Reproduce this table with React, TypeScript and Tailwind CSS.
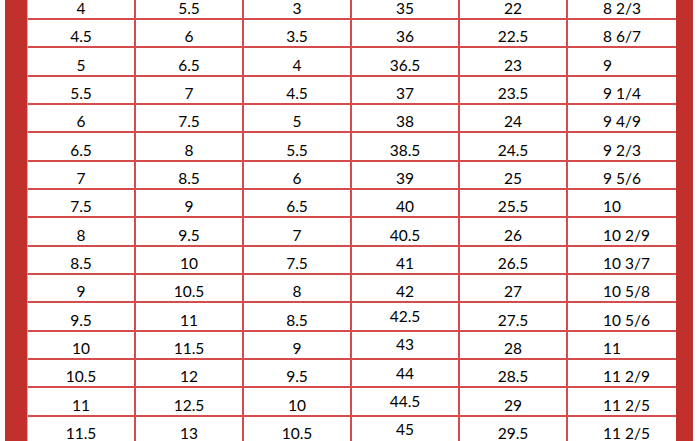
import React from "react";

const rows: string[][] = [
  ["4", "5.5", "3", "35", "22", "8 2/3"],
  ["4.5", "6", "3.5", "36", "22.5", "8 6/7"],
  ["5", "6.5", "4", "36.5", "23", "9"],
  ["5.5", "7", "4.5", "37", "23.5", "9 1/4"],
  ["6", "7.5", "5", "38", "24", "9 4/9"],
  ["6.5", "8", "5.5", "38.5", "24.5", "9 2/3"],
  ["7", "8.5", "6", "39", "25", "9 5/6"],
  ["7.5", "9", "6.5", "40", "25.5", "10"],
  ["8", "9.5", "7", "40.5", "26", "10 2/9"],
  ["8.5", "10", "7.5", "41", "26.5", "10 3/7"],
  ["9", "10.5", "8", "42", "27", "10 5/8"],
  ["9.5", "11", "8.5", "42.5", "27.5", "10 5/6"],
  ["10", "11.5", "9", "43", "28", "11"],
  ["10.5", "12", "9.5", "44", "28.5", "11 2/9"],
  ["11", "12.5", "10", "44.5", "29", "11 2/5"],
  ["11.5", "13", "10.5", "45", "29.5", "11 2/5"],
];

function Cell({ value, col, row }: { value: string; col: number; row: number }) {
  // the last column is left aligned; the EU column is centred from 42.5 down
  const centred = col === 3 && row >= 11;
  const last = col === 5;
  return (
    <div
      className={
        "flex border-[#d44c4c] " +
        (last ? "justify-start pl-[35px] " : "justify-center border-r-2 ") +
        (centred ? "items-center pb-0" : "items-end pb-[2px]")
      }
    >
      <span className="leading-[15px]">{value}</span>
    </div>
  );
}

export default function App() {
  return (
    <div className="flex h-[441px] w-full overflow-hidden bg-white">
      <div className="w-[5px] shrink-0 bg-white" />
      <div className="w-[22px] shrink-0 bg-[#c2302d]" />
      <div
        className="flex-1 overflow-hidden border-l border-[#eaa5a5] text-[15.5px] text-black"
        style={{ fontFamily: "Lato, 'Open Sans', sans-serif" }}
      >
        <div className="-mt-[8.35px]">
          {rows.map((r, i) => (
            <div key={i} className="grid h-[28.35px] grid-cols-6 border-b-2 border-[#d44c4c]">
              {r.map((v, j) => (
                <Cell key={j} value={v} col={j} row={i} />
              ))}
            </div>
          ))}
        </div>
      </div>
      <div className="w-[17px] shrink-0 bg-[#c2302d]" />
      <div className="w-[7px] shrink-0 bg-white" />
    </div>
  );
}
